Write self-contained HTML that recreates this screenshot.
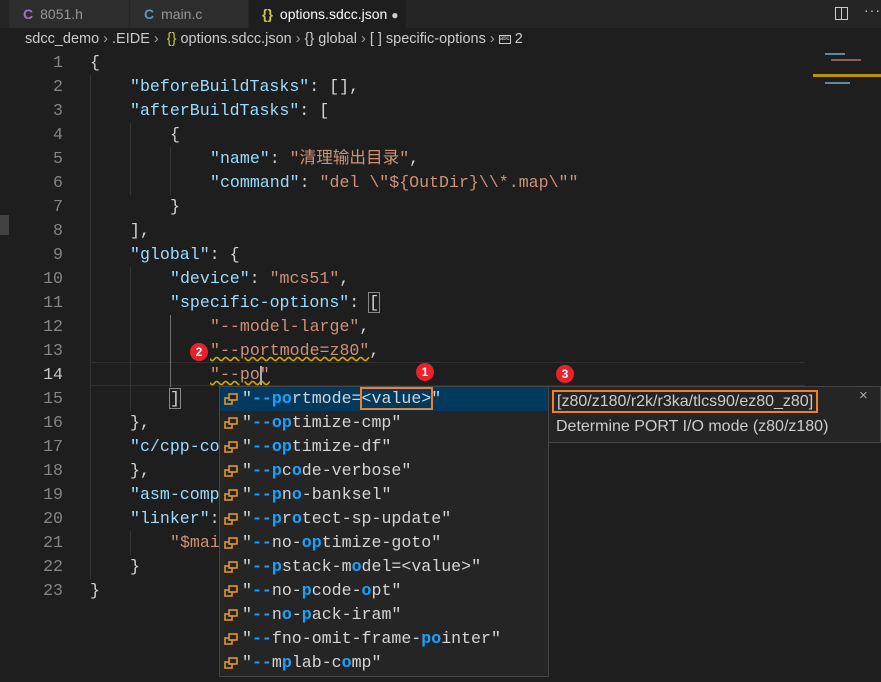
<!DOCTYPE html>
<html><head><meta charset="utf-8"><style>
*{margin:0;padding:0;box-sizing:border-box}
body{width:881px;height:682px;background:#1e1e1e;overflow:hidden;position:relative;font-family:"Liberation Sans","Noto Sans CJK SC",sans-serif}
.tabs{position:absolute;left:0;top:0;width:881px;height:28px;background:#252526}
.tab{position:absolute;top:0;height:28px;background:#2d2d2d;color:#969696;font-size:14px;line-height:28px}
.tab b{font-weight:bold;margin-right:7px}
.crumb{position:absolute;left:0;top:28px;height:22px;width:881px;color:#cccccc;font-size:14.5px;line-height:22px;padding-left:25px;white-space:nowrap}
.crumb .s{color:#a0a0a0;margin:0 4px}
.mono{font-family:"Liberation Mono","Noto Sans CJK SC",monospace;font-size:16.6px}
.ln{position:absolute;left:20px;width:43px;text-align:right;color:#858585;height:24px;line-height:24px}
.code{position:absolute;height:24px;line-height:24px;white-space:pre;color:#d4d4d4}
.k{color:#9cdcfe}.s1{color:#ce9178}
.guide{position:absolute;width:1px;background:#353535}
.sug{position:absolute;left:219px;top:386px;width:330px;height:291px;background:#252526;border:1px solid #454545}
.row{position:absolute;left:0;width:328px;height:24px;line-height:24px;white-space:pre;color:#d4d4d4}
.row .h{color:#18a3ff;font-weight:bold}
.ic{position:absolute;left:4px;top:6px;width:14px;height:12px}
.det{position:absolute;left:548px;top:386px;width:333px;height:57px;background:#252526;border:1px solid #454545;color:#cccccc;font-size:16px}
.badge{position:absolute;width:18px;height:18px;border-radius:9px;background:#e8222a;color:#fff;font-size:12px;font-weight:bold;text-align:center;line-height:18px}
</style></head><body>
<div class="tabs">
 <div class="tab" style="left:9px;width:120px;padding-left:14px"><b style="color:#a074c4">C</b>8051.h</div>
 <div class="tab" style="left:130px;width:118px;padding-left:14px"><b style="color:#519aba">C</b>main.c</div>
 <div class="tab" style="left:249px;width:157px;background:#1e1e1e;color:#fff;padding-left:13px"><b style="color:#cbcb41">{}</b>options.sdcc.json <span style="color:#ccc;font-size:12px">●</span></div>
 <div style="position:absolute;left:835px;top:7px;width:13px;height:13px;border:1px solid #ccc"><div style="position:absolute;left:5px;top:0;width:1px;height:11px;background:#ccc"></div></div>
 <div style="position:absolute;left:864px;top:2px;color:#ccc;font-size:14px;letter-spacing:1px">···</div>
</div>
<div class="crumb">sdcc_demo<span class="s">›</span>.EIDE<span class="s">›</span> <span style="color:#cbcb41">{}</span> options.sdcc.json<span class="s">›</span><span>{}</span> global<span class="s">›</span>[ ] specific-options<span class="s">›</span><span style="display:inline-block;width:12px;height:9px;border:1px solid #ccc;font-size:6px;line-height:7px;vertical-align:middle;text-align:center">abc</span> 2</div>
<div style="position:absolute;left:0;top:215px;width:9px;height:20px;background:#424242"></div>

<div class="mono">
<div class="ln" style="top:51px">1</div><div class="ln" style="top:75px">2</div><div class="ln" style="top:99px">3</div><div class="ln" style="top:123px">4</div><div class="ln" style="top:147px">5</div><div class="ln" style="top:171px">6</div><div class="ln" style="top:195px">7</div><div class="ln" style="top:219px">8</div><div class="ln" style="top:243px">9</div><div class="ln" style="top:267px">10</div><div class="ln" style="top:291px">11</div><div class="ln" style="top:315px">12</div><div class="ln" style="top:339px">13</div><div class="ln" style="top:363px;color:#c6c6c6">14</div><div class="ln" style="top:387px">15</div><div class="ln" style="top:411px">16</div><div class="ln" style="top:435px">17</div><div class="ln" style="top:459px">18</div><div class="ln" style="top:483px">19</div><div class="ln" style="top:507px">20</div><div class="ln" style="top:531px">21</div><div class="ln" style="top:555px">22</div><div class="ln" style="top:579px">23</div>

<div style="position:absolute;left:90px;top:362px;width:715px;height:24px;border-top:1px solid #303030;border-bottom:1px solid #303030"></div>
<div class="guide" style="left:90px;top:75px;height:504px"></div>
<div class="guide" style="left:130px;top:123px;height:72px"></div>
<div class="guide" style="left:170px;top:147px;height:48px"></div>
<div class="guide" style="left:130px;top:267px;height:144px"></div>
<div class="guide" style="left:170px;top:315px;height:72px;background:#707070"></div>
<div class="guide" style="left:130px;top:531px;height:24px"></div>

<div class="code" style="left:90px;top:51px">{</div>
<div class="code" style="left:130px;top:75px"><span class="k">"beforeBuildTasks"</span>: [],</div>
<div class="code" style="left:130px;top:99px"><span class="k">"afterBuildTasks"</span>: [</div>
<div class="code" style="left:170px;top:123px">{</div>
<div class="code" style="left:210px;top:147px"><span class="k">"name"</span>: <span class="s1">"清理输出目录"</span>,</div>
<div class="code" style="left:210px;top:171px"><span class="k">"command"</span>: <span class="s1">"del \"${OutDir}\\*.map\""</span></div>
<div class="code" style="left:170px;top:195px">}</div>
<div class="code" style="left:130px;top:219px">],</div>
<div class="code" style="left:130px;top:243px"><span class="k">"global"</span>: {</div>
<div class="code" style="left:170px;top:267px"><span class="k">"device"</span>: <span class="s1">"mcs51"</span>,</div>
<div class="code" style="left:170px;top:291px"><span class="k">"specific-options"</span>: <span style="outline:1px solid #888">[</span></div>
<div class="code" style="left:210px;top:315px"><span class="s1">"--model-large"</span>,</div>
<div class="code" style="left:210px;top:339px"><span class="s1" style="text-decoration:underline wavy #cca700">"--portmode=z80"</span>,</div>
<div class="code" style="left:210px;top:363px"><span class="s1" style="text-decoration:underline wavy #cca700">"--po"</span></div>
<div style="position:absolute;left:260px;top:366px;width:2px;height:19px;background:#aeafad"></div>
<div class="code" style="left:170px;top:387px"><span style="outline:1px solid #888">]</span></div>
<div class="code" style="left:130px;top:411px">},</div>
<div class="code" style="left:130px;top:435px"><span class="k">"c/cpp-co</span></div>
<div class="code" style="left:130px;top:459px">},</div>
<div class="code" style="left:130px;top:483px"><span class="k">"asm-comp</span></div>
<div class="code" style="left:130px;top:507px"><span class="k">"linker"</span>:</div>
<div class="code" style="left:170px;top:531px"><span class="s1">"$mai</span></div>
<div class="code" style="left:130px;top:555px">}</div>
<div class="code" style="left:90px;top:579px">}</div>

<div class="sug">
 <div class="row" style="top:0;background:#04395e"><span style="position:absolute;left:22px">"<span class="h">--po</span>rtmode=<span style="outline:2px solid #f0802a;outline-offset:0">&lt;value&gt;</span>"</span></div>
 <div class="row" style="top:24px"><span style="position:absolute;left:22px">"<span class="h">--op</span>timize-cmp"</span></div>
 <div class="row" style="top:48px"><span style="position:absolute;left:22px">"<span class="h">--op</span>timize-df"</span></div>
 <div class="row" style="top:72px"><span style="position:absolute;left:22px">"<span class="h">--p</span>c<span class="h">o</span>de-verbose"</span></div>
 <div class="row" style="top:96px"><span style="position:absolute;left:22px">"<span class="h">--p</span>n<span class="h">o</span>-banksel"</span></div>
 <div class="row" style="top:120px"><span style="position:absolute;left:22px">"<span class="h">--p</span>r<span class="h">o</span>tect-sp-update"</span></div>
 <div class="row" style="top:144px"><span style="position:absolute;left:22px">"<span class="h">--</span>no-<span class="h">op</span>timize-goto"</span></div>
 <div class="row" style="top:168px"><span style="position:absolute;left:22px">"<span class="h">--p</span>stack-m<span class="h">o</span>del=&lt;value&gt;"</span></div>
 <div class="row" style="top:192px"><span style="position:absolute;left:22px">"<span class="h">--</span>no-<span class="h">p</span>code-<span class="h">o</span>pt"</span></div>
 <div class="row" style="top:216px"><span style="position:absolute;left:22px">"<span class="h">--</span>n<span class="h">o</span>-<span class="h">p</span>ack-iram"</span></div>
 <div class="row" style="top:240px"><span style="position:absolute;left:22px">"<span class="h">--</span>fno-omit-frame-<span class="h">po</span>inter"</span></div>
 <div class="row" style="top:264px"><span style="position:absolute;left:22px">"<span class="h">--</span>m<span class="h">p</span>lab-c<span class="h">o</span>mp"</span></div>
</div>
</div>
<div class="det">
 <div style="position:absolute;left:3px;top:3px;height:23px;padding:0 3px;border:2px solid #f0802a;line-height:19px">[z80/z180/r2k/r3ka/tlcs90/ez80_z80]</div>
 <div style="position:absolute;left:7px;top:29px;line-height:22px">Determine PORT I/O mode (z80/z180)</div>
 <div style="position:absolute;left:310px;top:0px;color:#aaa;font-size:15px">×</div>
</div>
<div class="badge" style="left:416px;top:363px">1</div>
<div class="badge" style="left:190px;top:343px">2</div>
<div class="badge" style="left:556px;top:365px">3</div>
<div style="position:absolute;left:813px;top:49px;width:68px;height:50px">
 <div style="position:absolute;left:0;top:25px;width:68px;height:3px;background:#b89500"></div>
 <div style="position:absolute;left:12px;top:4px;width:20px;height:2px;background:#5b8aa8"></div>
 <div style="position:absolute;left:18px;top:10px;width:30px;height:2px;background:#8a6250"></div>
 <div style="position:absolute;left:12px;top:33px;width:25px;height:2px;background:#5b8aa8"></div>
</div>
<script>
document.querySelectorAll('.row').forEach(function(r){r.insertAdjacentHTML('afterbegin','<svg class="ic" viewBox="0 0 14 12"><rect x="1" y="5" width="7" height="6" fill="none" stroke="#ee9d28" stroke-width="1.5"/><rect x="5" y="1" width="8" height="6" fill="#252526" stroke="#ee9d28" stroke-width="1.5"/></svg>');});
</script>
</body></html>
